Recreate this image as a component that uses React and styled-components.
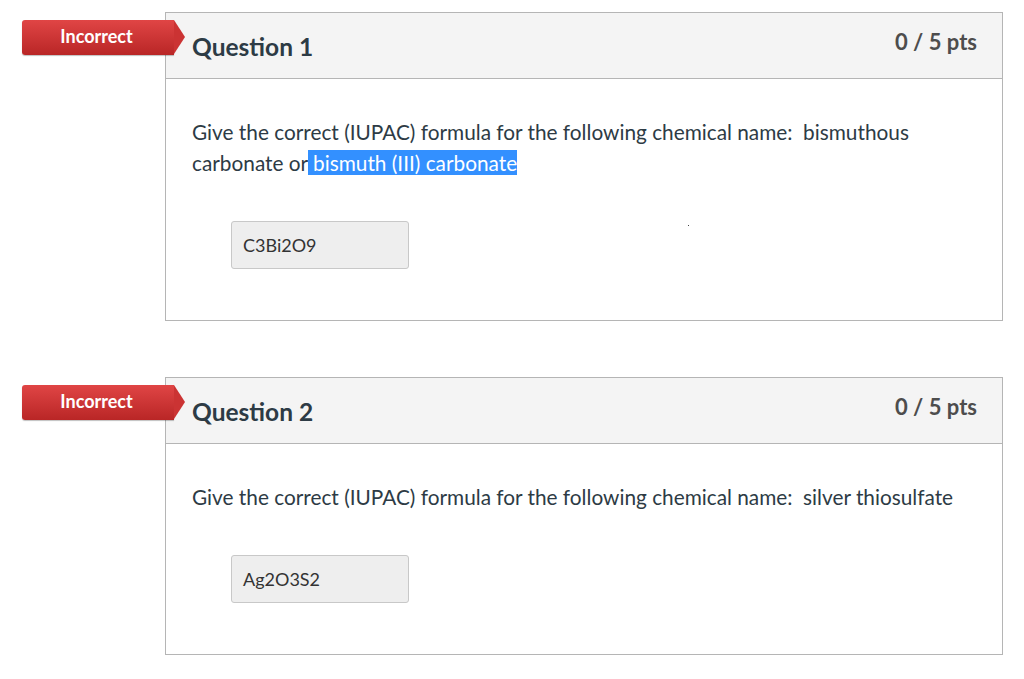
import React from 'react';
import styled, { createGlobalStyle } from 'styled-components';

const GlobalStyle = createGlobalStyle`
  html, body {
    margin: 0;
    padding: 0;
    background: #fff;
    font-family: Lato, "Open Sans", "Liberation Sans", sans-serif;
  }
`;

const Page = styled.div`
  padding: 12px 22px 0 165px;
  display: flex;
  flex-direction: column;
  gap: 56px;
`;

const Question = styled.div`
  position: relative;
  border: 1px solid #b5b5b5;
  width: 836px;
`;

const Badge = styled.div`
  position: absolute;
  left: -144px;
  top: 7px;
  width: 152px;
  height: 35px;
  box-sizing: border-box;
  padding-right: 3px;
  background: linear-gradient(#e04545, #b92626);
  border-radius: 3px 0 0 3px;
  color: #fff;
  font-weight: 700;
  font-size: 18px;
  line-height: 33px;
  text-align: center;
  box-shadow: 0 1px 1px rgba(0, 0, 0, 0.25);
  z-index: 2;

  &::after {
    content: '';
    position: absolute;
    right: -11px;
    top: 0;
    border-top: 17.5px solid transparent;
    border-bottom: 17.5px solid transparent;
    border-left: 11px solid #cb3333;
  }
`;

const Header = styled.div`
  height: 66px;
  box-sizing: border-box;
  background: #f4f4f4;
  border-bottom: 1px solid #b5b5b5;
  display: flex;
  justify-content: space-between;
  padding: 0 25px 0 26px;
`;

const Title = styled.div`
  margin-top: 19px;
  font-size: 24.5px;
  font-weight: 700;
  color: #2d3b45;
`;

const Points = styled.div`
  margin-top: 15px;
  font-size: 22px;
  font-weight: 700;
  color: #4d4d4d;
`;

const Body = styled.div`
  position: relative;
  padding: 37px 26px 51px 26px;
`;

const Prompt = styled.p`
  margin: 0 0 43px;
  font-size: 20.8px;
  line-height: 31px;
  color: #2d3b45;
`;

const Highlight = styled.span`
  background: #3390ff;
  color: #fff;
`;

const Answer = styled.div`
  margin-left: 39px;
  width: 178px;
  height: 48px;
  box-sizing: border-box;
  background: #eeeeee;
  border: 1px solid #c8c8c8;
  border-radius: 3px;
  padding-left: 11px;
  font-size: 18px;
  line-height: 46px;
  color: #333;
`;

const Dot = styled.span`
  position: absolute;
  left: 522px;
  top: 146px;
  width: 1px;
  height: 1px;
  background: #444;
`;

const questions = [
  {
    id: 1,
    text: (
      <>
        Give the correct (IUPAC) formula for the following chemical name:&nbsp; bismuthous carbonate or
        <Highlight> bismuth (III) carbonate</Highlight>
      </>
    ),
    answer: 'C3Bi2O9',
    dot: true,
  },
  {
    id: 2,
    text: <>Give the correct (IUPAC) formula for the following chemical name:&nbsp; silver thiosulfate</>,
    answer: 'Ag2O3S2',
  },
];

export default function App() {
  return (
    <>
      <GlobalStyle />
      <Page>
        {questions.map((q) => (
          <Question key={q.id}>
            <Badge>Incorrect</Badge>
            <Header>
              <Title>Question {q.id}</Title>
              <Points>0 / 5 pts</Points>
            </Header>
            <Body>
              <Prompt>{q.text}</Prompt>
              <Answer>{q.answer}</Answer>
              {q.dot && <Dot />}
            </Body>
          </Question>
        ))}
      </Page>
    </>
  );
}
